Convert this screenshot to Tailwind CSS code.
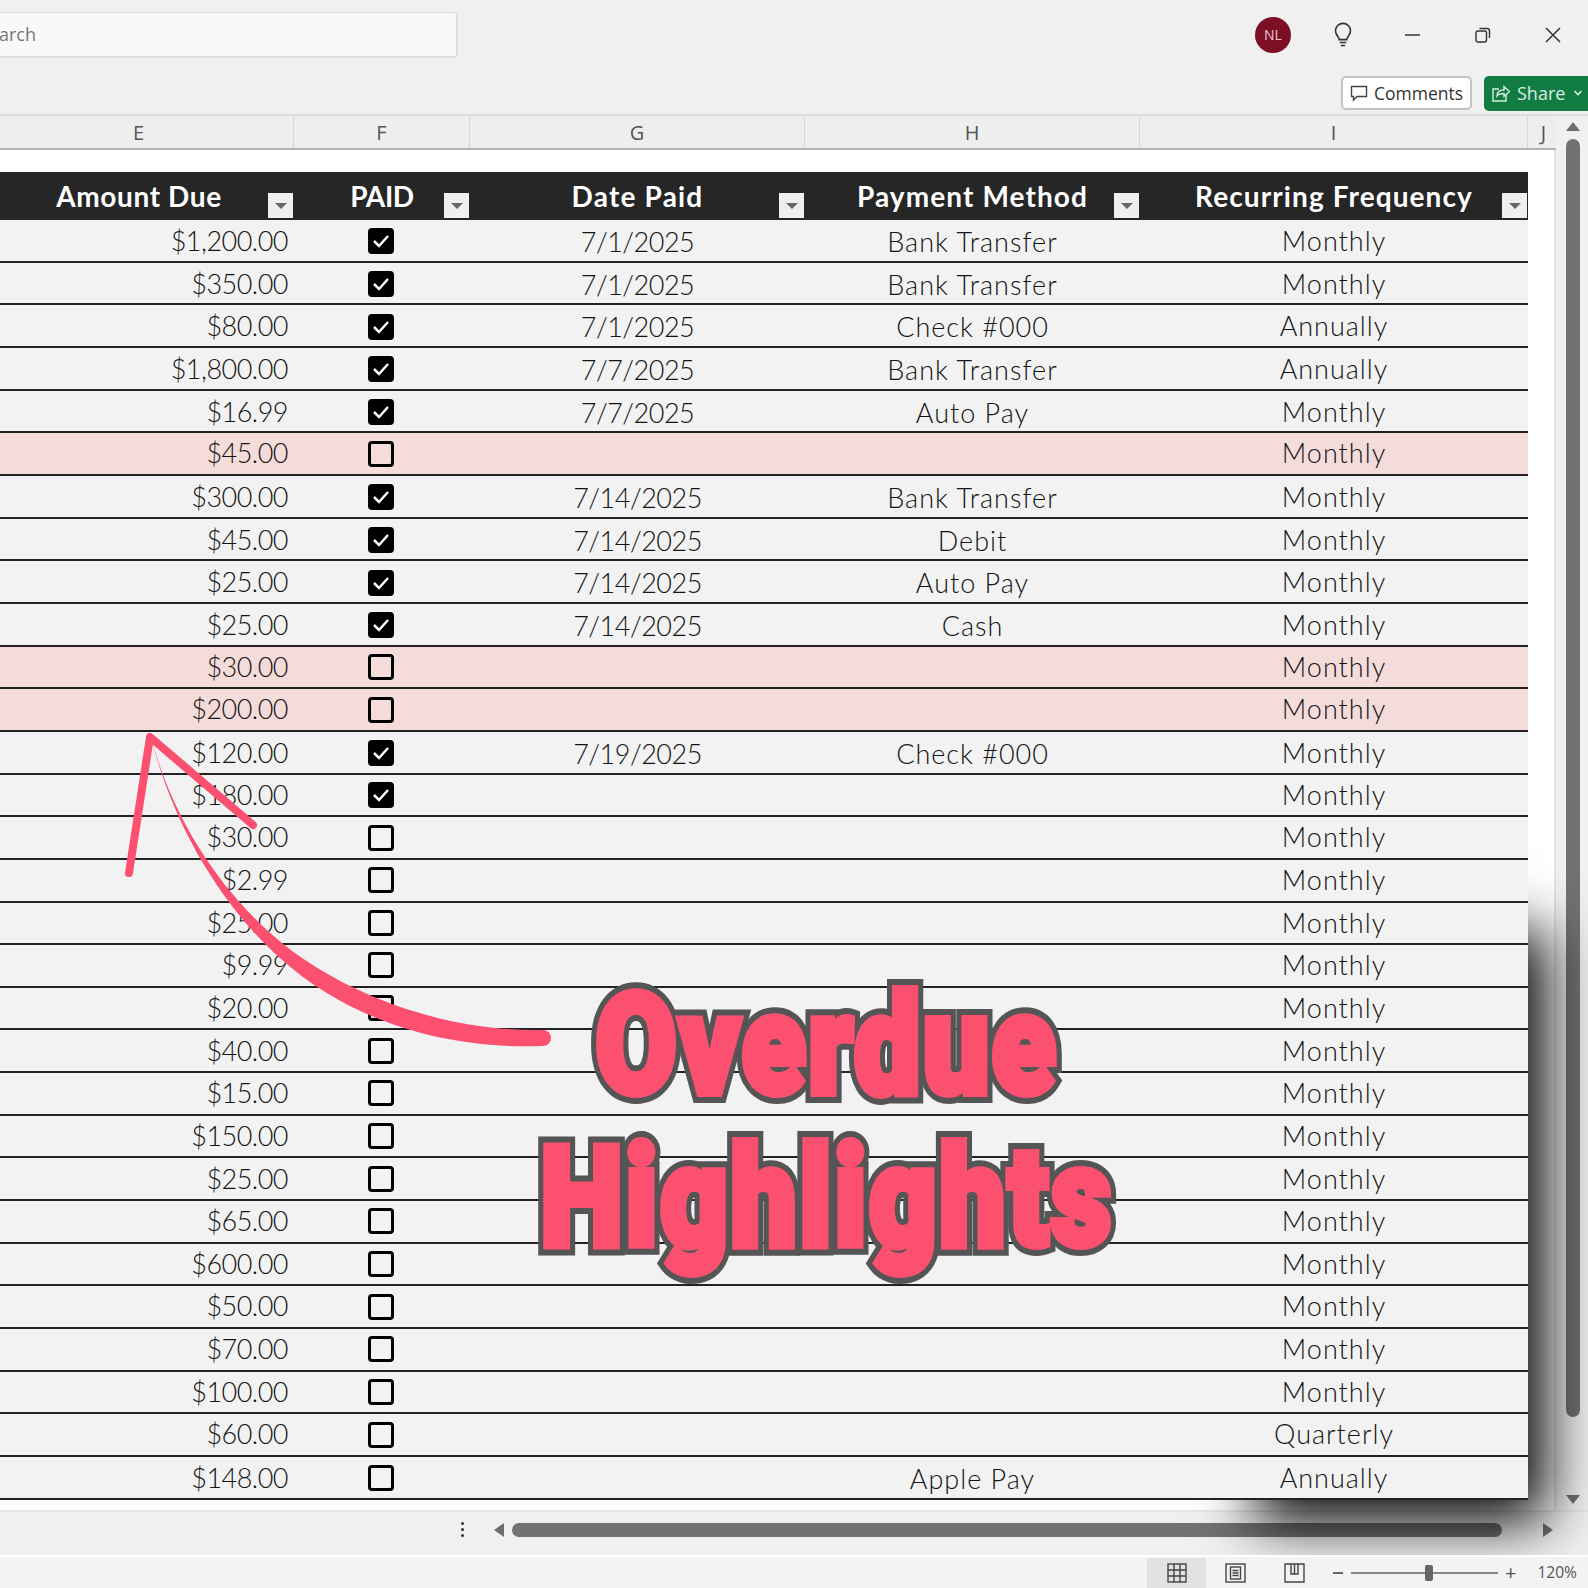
<!DOCTYPE html>
<html lang="en">
  <head>
    <meta charset="UTF-8" />
    <title>Bills tracker</title>
    <script src="https://cdn.jsdelivr.net/npm/@tailwindcss/browser@4"></script>
  </head>
  <body class="bg-[#f0f0f0] overflow-hidden">
    <div class="relative w-[1588px] h-[1588px] overflow-hidden font-['Lato',sans-serif] text-[#141414]">

      <!-- Top chrome -->
      <header class="relative z-30 h-[116px] bg-[#f0f0f0] border-b-2 border-[#dcdcdc] font-['Open_Sans',sans-serif]">
        <div class="flex items-center h-[70px] pb-[1px]">
          <div class="w-[458px] h-[46px] bg-[#f9f9f9] rounded-r-[4px] border-b-2 border-r-2 border-t border-[#dedede] flex items-center text-[18px] text-[#777]">
            <span class="-ml-[1px]">arch</span>
          </div>
          <div class="ml-auto flex items-center">
            <div class="w-9 h-9 rounded-full bg-[#7d0f24] text-[#e9c9cf] text-[14px] flex items-center justify-center">NL</div>
            <svg class="ml-[42px]" width="20" height="28" viewBox="0 0 24 32" fill="none" stroke="#333" stroke-width="1.900"><path d="M7.500 21.500c0-3-4.500-5-4.500-10.500a9 9 0 0 1 18 0c0 5.500-4.500 7.500-4.500 10.500z"/><path d="M8 25h8M9.500 28.500h5"/></svg>
            <svg class="ml-[52px]" width="16" height="16" viewBox="0 0 16 16" stroke="#333" stroke-width="1.500"><path d="M0 8h15"/></svg>
            <svg class="ml-[54px]" width="16" height="16" viewBox="0 0 16 16" fill="none" stroke="#333" stroke-width="1.400"><rect x="1" y="4" width="10.500" height="11" rx="2"/><path d="M4.500 1.500h7.500a2.500 2.500 0 0 1 2.500 2.500v7"/></svg>
            <svg class="ml-[54px] mr-[27px]" width="16" height="16" viewBox="0 0 16 16" stroke="#333" stroke-width="1.500"><path d="M1 1l14 14M15 1L1 15"/></svg>
          </div>
        </div>
        <div class="flex justify-end items-center gap-[12px] h-[36px] mt-[5px]">
          <div class="w-[131px] h-[34px] bg-white border-2 border-[#c4c4c4] rounded-[5px] flex items-center justify-center gap-[6px] text-[17.5px] text-[#333]">
            <svg width="18" height="18" viewBox="0 0 18 18" fill="none" stroke="#444" stroke-width="1.400"><path d="M1.500 2.500h15v10H7l-3.500 3.500v-3.500h-2z"/></svg>
            <span>Comments</span>
          </div>
          <div class="w-[104px] h-[35px] bg-[#107c41] rounded-l-[5px] flex items-center gap-[6px] pl-[7px] text-[18px] text-[#d8eee2]">
            <svg width="20" height="20" viewBox="0 0 20 20" fill="none" stroke="#d8eee2" stroke-width="1.400"><path d="M8 6H2v12h13v-6"/><path d="M6 13c0-4 3-6 7-6V3.500l5.500 5-5.500 5V10.500c-3 0-5.500.5-7 2.500z"/></svg>
            <span>Share</span>
            <svg class="ml-[2px]" width="10" height="8" viewBox="0 0 10 8" fill="none" stroke="#d8eee2" stroke-width="1.600"><path d="M1.500 2L5 5.500 8.500 2"/></svg>
          </div>
        </div>
      </header>

      <div class="flex h-[1394px]">
        <div class="w-[1556px]">
          <!-- Column letters -->
          <div class="flex h-[34px] pt-[1px] -ml-[16px] bg-[#eeeeee] border-b-2 border-[#b4b4b4] text-[#555] text-[20px] font-['Open_Sans',sans-serif]">
            <div class="w-[310px] border-r border-[#d6d6d6] flex items-center justify-center">E</div>
            <div class="w-[176px] border-r border-[#d6d6d6] flex items-center justify-center">F</div>
            <div class="w-[335px] border-r border-[#d6d6d6] flex items-center justify-center">G</div>
            <div class="w-[335px] border-r border-[#d6d6d6] flex items-center justify-center">H</div>
            <div class="w-[388px] border-r border-[#d6d6d6] flex items-center justify-center">I</div>
            <div class="w-[28px] flex items-center justify-center pl-[3px]">J</div>
          </div>
          <!-- Sheet -->
          <main class="h-[1360px] bg-white border-r-2 border-[#e4e4e4] pt-[22px]">
            <div id="table" class="relative z-20 w-[1544px] -ml-[16px]"></div>
          </main>
        </div>
        <!-- Vertical scrollbar -->
        <aside class="flex-1 flex flex-col items-center pt-[6px] pl-[2px] bg-[#f0f0f0]">
          <div class="w-0 h-0 border-x-[7px] border-x-transparent border-b-[9px] border-b-[#6e6e6e]"></div>
          <div class="w-[14px] h-[1278px] mt-[8px] rounded-full bg-[#727272]"></div>
          <div class="w-0 h-0 mt-[78px] border-x-[7px] border-x-transparent border-t-[9px] border-t-[#6e6e6e]"></div>
        </aside>
      </div>

      <!-- Horizontal scrollbar row -->
      <div class="h-[45px] bg-[#f0f0f0] border-t-2 border-[#e6e6e6] flex items-center pb-[8px]">
        <div class="ml-[461px] flex flex-col gap-[3px]">
          <span class="w-[3px] h-[3px] bg-[#333] rounded-full"></span>
          <span class="w-[3px] h-[3px] bg-[#333] rounded-full"></span>
          <span class="w-[3px] h-[3px] bg-[#333] rounded-full"></span>
        </div>
        <div class="ml-[30px] w-0 h-0 border-y-[7px] border-y-transparent border-r-[10px] border-r-[#6e6e6e]"></div>
        <div class="ml-[8px] w-[990px] h-[14px] rounded-full bg-[#727272]"></div>
        <div class="ml-[41px] w-0 h-0 border-y-[7px] border-y-transparent border-l-[10px] border-l-[#6e6e6e]"></div>
      </div>

      <!-- Status bar -->
      <footer class="relative z-30 h-[33px] bg-[#f3f3f3] border-t-2 border-white flex items-center text-[#555] font-['Open_Sans',sans-serif]">
        <div class="ml-[1147px] w-[59px] h-[30px] bg-[#e2e2e2] flex items-center justify-center">
          <svg width="20" height="20" viewBox="0 0 20 20" fill="none" stroke="#444" stroke-width="1.400"><rect x="1" y="1" width="18" height="18"/><path d="M1 7h18M1 13h18M7 1v18M13 1v18"/></svg>
        </div>
        <svg class="ml-[19px]" width="21" height="20" viewBox="0 0 21 20" fill="none" stroke="#444" stroke-width="1.400"><rect x="1" y="1" width="19" height="18"/><rect x="5.500" y="4" width="10" height="12"/><path d="M7.500 7.500h6M7.500 10h6M7.500 12.500h6"/></svg>
        <svg class="ml-[38px]" width="21" height="20" viewBox="0 0 21 20" fill="none" stroke="#444" stroke-width="1.400"><path d="M1 1h19v18H1zM7 1v10h7V1M10.500 1v10"/></svg>
        <span class="ml-[28px] w-[10px] h-[2px] bg-[#666]"></span>
        <div class="relative ml-[8px] w-[147px] h-[2px] bg-[#888]">
          <div class="absolute left-[74px] -top-[7px] w-[8px] h-[16px] bg-[#666] rounded-[2px]"></div>
        </div>
        <span class="ml-[7px] text-[20px] leading-none">+</span>
        <span class="ml-[21px] text-[15.5px]">120%</span>
      </footer>

      <!-- Drop shadow from the pasted table section -->
      <div class="absolute z-10 left-[1237px] top-[908px] w-[291px] h-[591px] shadow-[18px_22px_55px_rgba(0,0,0,1)]"></div>

      <!-- Callout: arrow and label -->
      <svg class="absolute z-40 left-0 top-0 pointer-events-none" width="1588" height="1588" fill="none">
        <path d="M129 873L150 737L253 825" stroke="#fb5070" stroke-width="8" stroke-linecap="round" stroke-linejoin="round"/>
        <path d="M151 737C170 810 215 890 287 947C345 992 440 1032 543 1030L543 1046C430 1050 340 1012 281 959C215 900 170 815 151 737Z" fill="#fb5070"/>
        <circle cx="543" cy="1038" r="8" fill="#fb5070"/>
        <g class="font-['Roboto',sans-serif] font-black text-[140px] tracking-[3px]" text-anchor="middle" stroke-linejoin="miter" stroke-miterlimit="2.500">
          <g fill="#555" stroke="#555" stroke-width="20">
            <use href="#label-1" />
            <use href="#label-2" />
          </g>
          <g fill="#fb5070" stroke="#fb5070" stroke-width="8">
            <text id="label-1" transform="translate(827 1093) scale(0.84 1)">Overdue</text>
            <text id="label-2" transform="translate(827 1245) scale(0.84 1)">Highlights</text>
          </g>
        </g>
      </svg>
    </div>

    <script>
      const rows = [
        ['$1,200.00', 1, '7/1/2025', 'Bank Transfer', 'Monthly'],
        ['$350.00', 1, '7/1/2025', 'Bank Transfer', 'Monthly'],
        ['$80.00', 1, '7/1/2025', 'Check #000', 'Annually'],
        ['$1,800.00', 1, '7/7/2025', 'Bank Transfer', 'Annually'],
        ['$16.99', 1, '7/7/2025', 'Auto Pay', 'Monthly'],
        ['$45.00', 0, '', '', 'Monthly', true],
        ['$300.00', 1, '7/14/2025', 'Bank Transfer', 'Monthly'],
        ['$45.00', 1, '7/14/2025', 'Debit', 'Monthly'],
        ['$25.00', 1, '7/14/2025', 'Auto Pay', 'Monthly'],
        ['$25.00', 1, '7/14/2025', 'Cash', 'Monthly'],
        ['$30.00', 0, '', '', 'Monthly', true],
        ['$200.00', 0, '', '', 'Monthly', true],
        ['$120.00', 1, '7/19/2025', 'Check #000', 'Monthly'],
        ['$180.00', 1, '', '', 'Monthly'],
        ['$30.00', 0, '', '', 'Monthly'],
        ['$2.99', 0, '', '', 'Monthly'],
        ['$25.00', 0, '', '', 'Monthly'],
        ['$9.99', 0, '', '', 'Monthly'],
        ['$20.00', 0, '', '', 'Monthly'],
        ['$40.00', 0, '', '', 'Monthly'],
        ['$15.00', 0, '', '', 'Monthly'],
        ['$150.00', 0, '', '', 'Monthly'],
        ['$25.00', 0, '', '', 'Monthly'],
        ['$65.00', 0, '', '', 'Monthly'],
        ['$600.00', 0, '', '', 'Monthly'],
        ['$50.00', 0, '', '', 'Monthly'],
        ['$70.00', 0, '', '', 'Monthly'],
        ['$100.00', 0, '', '', 'Monthly'],
        ['$60.00', 0, '', '', 'Quarterly'],
        ['$148.00', 0, '', 'Apple Pay', 'Annually']
      ];

      const gridCols = 'grid grid-cols-[310px_176px_335px_335px_388px]';

      const heads = [
        ['Amount Due', 'tracking-[0.6px]'],
        ['PAID', 'tracking-[-0.4px]'],
        ['Date Paid', 'tracking-[1.2px]'],
        ['Payment Method', 'tracking-[1.1px]'],
        ['Recurring Frequency', 'tracking-[1.1px]']
      ];

      function headCell([label, track]) {
        return `<div class="relative flex items-center justify-center ${track}">${label}
          <span class="absolute right-[1px] bottom-[2px] w-[25px] h-[25px] bg-[#efefef] flex items-center justify-center"><span class="w-0 h-0 border-x-[6px] border-x-transparent border-t-[6px] border-t-[#666]"></span></span>
        </div>`;
      }

      function checkbox(on) {
        if (!on) return '<span class="w-[26px] h-[26px] -ml-[2px] rounded-[4px] border-[3px] border-black"></span>';
        return `<span class="w-[26px] h-[26px] -ml-[2px] rounded-[4px] bg-black flex items-center justify-center">
          <svg width="18" height="14" viewBox="0 0 18 14" fill="none" stroke="white" stroke-width="2.500"><path d="M2 7l5 5 9-10"/></svg></span>`;
      }

      let html = `<div class="${gridCols} h-[48px] bg-[#262626] text-white font-bold text-[28px]">
        ${heads.map(headCell).join('')}
      </div>`;

      rows.forEach(r => {
        const bg = r[5] ? 'bg-[#f4dcdb]' : 'bg-[#f2f2f2]';
        html += `<div class="${gridCols} h-[42.67px] ${bg} border-b-2 border-[#222] text-[27px] font-light tracking-[1px]">
          <div class="flex items-center justify-end pr-[6px] tracking-[-0.5px]">${r[0]}</div>
          <div class="flex items-center justify-center">${checkbox(r[1])}</div>
          <div class="flex items-center justify-center pt-[2px] tracking-[-0.5px]">${r[2]}</div>
          <div class="flex items-center justify-center pt-[2px]">${r[3]}</div>
          <div class="flex items-center justify-center">${r[4]}</div>
        </div>`;
      });

      document.getElementById('table').innerHTML = html;
    </script>
  </body>
</html>
